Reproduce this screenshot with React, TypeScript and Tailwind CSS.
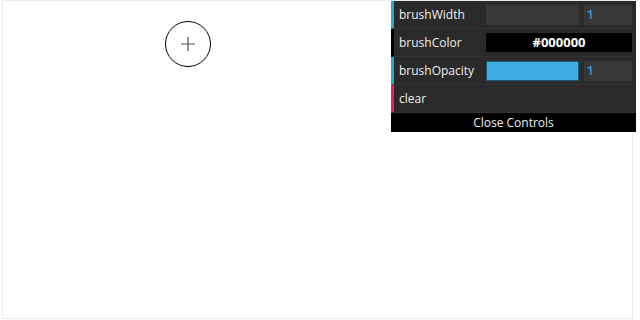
const FONT = { fontFamily: '"Open Sans", "DejaVu Sans", sans-serif' };

function Row({ border, label, children }: { border: string; label: string; children?: React.ReactNode }) {
  return (
    <div className={`flex h-[28px] items-center border-b border-[#333333] border-l-[3px] ${border} bg-[#2a2a2a] pl-[5px] pr-[4px]`}>
      <span className="w-[84px] shrink-0 text-[12px] font-medium text-[#eeeeee]">{label}</span>
      {children}
    </div>
  );
}

export default function App() {
  return (
    <div className="relative h-[320px] w-[640px] bg-white" style={FONT}>
      <div className="absolute left-[2px] top-0 h-[319px] w-[631px] border border-[#ececec]" />

      <div className="absolute left-[165px] top-[21px] flex h-[46px] w-[46px] items-center justify-center rounded-full border-[1.5px] border-black">
        <svg width="16" height="16" viewBox="0 0 16 16">
          <path d="M8 1v14M1 8h14" stroke="#555" strokeWidth="1.2" />
        </svg>
      </div>

      <div className="absolute left-[391px] top-[1px] w-[245px] bg-[#2a2a2a]">
        <Row border="border-l-[#2fa1d6]" label="brushWidth">
          <div className="ml-[3px] h-[20px] w-[93px] bg-[#383838]" />
          <div className="ml-[5px] flex h-[20px] flex-1 items-center bg-[#383838] pl-[3px] text-[12px] font-semibold text-[#2fa1d6]">1</div>
        </Row>
        <Row border="border-l-[#000000]" label="brushColor">
          <div className="ml-[3px] flex h-[19px] flex-1 items-center justify-center bg-black text-[13px] font-bold text-white">#000000</div>
        </Row>
        <Row border="border-l-[#2fa1d6]" label="brushOpacity">
          <div className="ml-[3px] h-[20px] w-[93px] border border-[#1a5a78] bg-[#3eaee0]" />
          <div className="ml-[5px] flex h-[20px] flex-1 items-center bg-[#383838] pl-[3px] text-[12px] font-semibold text-[#2fa1d6]">1</div>
        </Row>
        <Row border="border-l-[#e61d5f]" label="clear" />
        <div className="flex h-[19px] items-center justify-center bg-black text-[12px] font-medium text-[#eeeeee]">Close Controls</div>
      </div>
    </div>
  );
}
